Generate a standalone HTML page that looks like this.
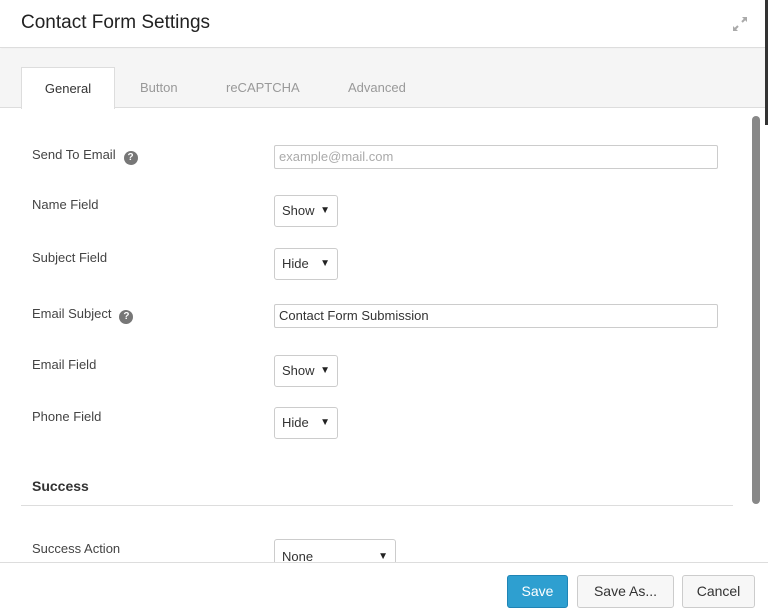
<!DOCTYPE html>
<html><head><style>
*{box-sizing:border-box;margin:0;padding:0}
body{width:768px;height:612px;overflow:hidden;background:#fff;font-family:"Liberation Sans",sans-serif;color:#333;position:relative}
.a{position:absolute}
.hdr{left:0;top:0;width:765px;height:48px;border-bottom:1px solid #ddd;box-shadow:0 1px 2px rgba(0,0,0,.08)}
.tabs{left:0;top:49px;width:765px;height:59px;background:#f5f5f5;border-bottom:1px solid #ddd}
.tab{top:67px;height:41px;font-size:13px;color:#999;line-height:42px}
.lbl{left:32px;font-size:13px;color:#444}
.inp{left:274px;width:444px;height:24px;border:1px solid #ccc;border-radius:2px;font-size:13px;line-height:22px;padding-left:4px}
.sel{left:274px;width:64px;height:32px;border:1px solid #ccc;border-radius:3px;font-size:13px;line-height:30px;padding-left:7px}
.sel b{position:absolute;right:7px;font-size:10px;color:#222}
.q{display:inline-block;width:14px;height:14px;border-radius:50%;background:#777;color:#fff;font-size:10px;font-weight:bold;text-align:center;line-height:14px;margin-left:8px;vertical-align:-1px}
.btn{top:575px;height:33px;border:1px solid #ccc;border-radius:3px;background:#f7f7f7;font-size:14px;line-height:31px;text-align:center;color:#333}
</style></head><body>
<div class="a hdr"></div>
<div class="a" style="left:21px;top:12px;font-size:19px;color:#222">Contact Form Settings</div>
<svg class="a" style="left:731px;top:15px" width="18" height="18" viewBox="0 0 18 18"><path d="M11 2h5v5zM7 16H2v-5z" fill="#aaa"/><path d="M15 3l-4 4M3 15l4-4" stroke="#aaa" stroke-width="2"/></svg>
<div class="a" style="left:765px;top:0;width:3px;height:125px;background:#333"></div>
<div class="a tabs"></div>
<div class="a tab" style="left:21px;width:94px;background:#fff;border:1px solid #ddd;border-bottom:none;color:#333;text-align:center;height:42px">General</div>
<div class="a tab" style="left:140px">Button</div>
<div class="a tab" style="left:226px">reCAPTCHA</div>
<div class="a tab" style="left:348px">Advanced</div>
<div class="a" style="left:752px;top:116px;width:8px;height:388px;background:#888;border-radius:4px"></div>

<div class="a lbl" style="top:147px">Send To Email<span class="q">?</span></div>
<div class="a inp" style="top:145px;color:#aaa">example@mail.com</div>
<div class="a lbl" style="top:197px">Name Field</div>
<div class="a sel" style="top:195px">Show<b>▼</b></div>
<div class="a lbl" style="top:250px">Subject Field</div>
<div class="a sel" style="top:248px">Hide<b>▼</b></div>
<div class="a lbl" style="top:306px">Email Subject<span class="q">?</span></div>
<div class="a inp" style="top:304px;color:#333">Contact Form Submission</div>
<div class="a lbl" style="top:357px">Email Field</div>
<div class="a sel" style="top:355px">Show<b>▼</b></div>
<div class="a lbl" style="top:409px">Phone Field</div>
<div class="a sel" style="top:407px">Hide<b>▼</b></div>
<div class="a" style="left:32px;top:478px;font-size:14px;font-weight:bold;color:#333">Success</div>
<div class="a" style="left:21px;top:505px;width:712px;height:1px;background:#ddd"></div>
<div class="a lbl" style="top:541px">Success Action</div>
<div class="a sel" style="top:539px;width:122px;height:40px;line-height:30px;padding-top:2px">None<b>▼</b></div>

<div class="a" style="left:0;top:562px;width:768px;height:50px;background:#fff;border-top:1px solid #ddd"></div>
<div class="a btn" style="left:507px;width:61px;background:#2e9fd0;border-color:#1f84b5;color:#fff">Save</div>
<div class="a btn" style="left:577px;width:97px">Save As...</div>
<div class="a btn" style="left:682px;width:73px">Cancel</div>
</body></html>
